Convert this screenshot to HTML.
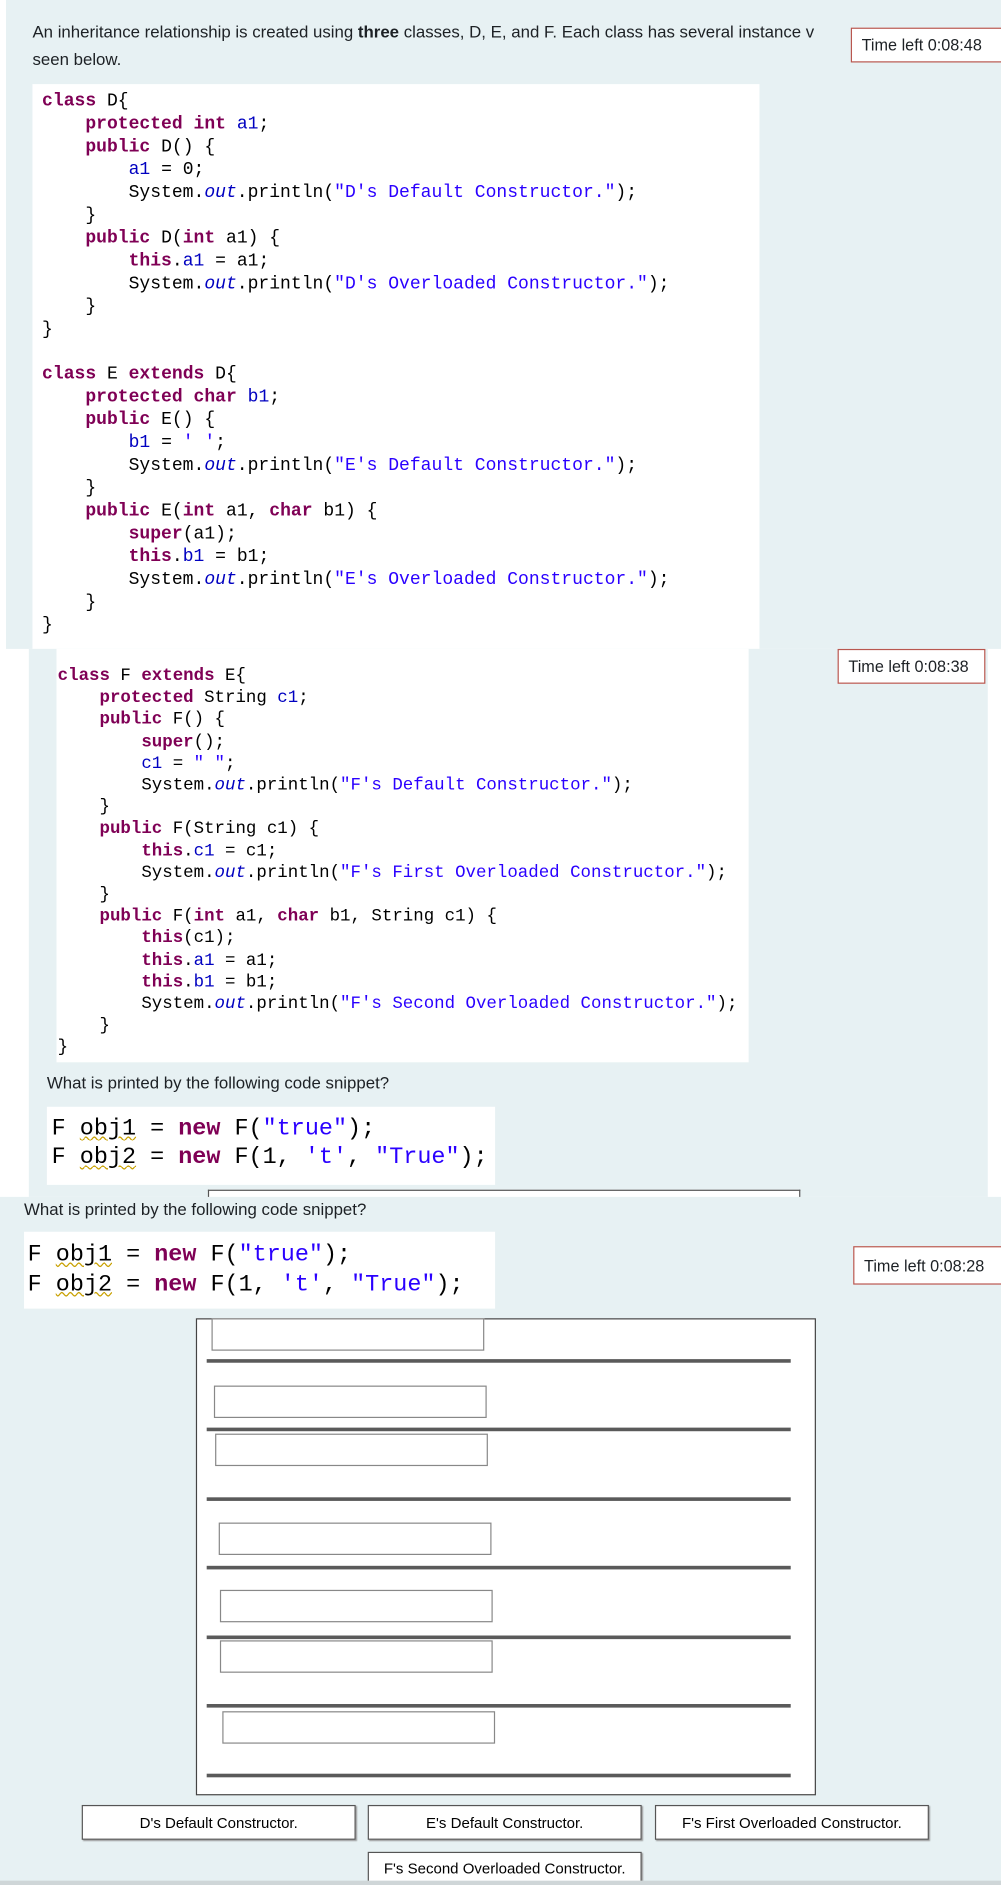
<!DOCTYPE html>
<html><head><meta charset="utf-8"><style>
html,body{margin:0;padding:0;background:#fff;width:1001px;height:1885px;overflow:hidden}
#w{position:absolute;left:0;top:0;width:833px;height:1569px;transform:scale(1.2017);transform-origin:0 0}
.a{position:absolute}
.bg{background:#e7f1f3}
.t{font-family:"Liberation Sans",sans-serif;font-size:14px;color:#1d2125;white-space:nowrap}
pre{margin:0;font-family:"Liberation Mono",monospace;color:#000}
.k{color:#7f0055;font-weight:bold}
.v{color:#0000c0}
.s{color:#2a00ff}
.i{font-style:italic;color:#0000c0}
.tm{border:1px solid #b9574f;background:#fff;font-family:"Liberation Sans",sans-serif;font-size:13.5px;color:#1d2125;box-sizing:border-box;padding-left:8px;display:flex;align-items:center}
.ib{border:1px solid #888;background:#fff;box-sizing:border-box;width:227px;height:27px}
.ln{height:3px;background:#5a5a5a;left:172px;width:486px}
.btn{border:1px solid #555;box-shadow:1px 1px 1px #999;background:#fff;box-sizing:border-box;font-family:"Liberation Sans",sans-serif;font-size:12.5px;display:flex;align-items:center;justify-content:center;width:228px;height:29px}
u{text-decoration:underline wavy #c8a000;text-decoration-thickness:1px}
</style></head><body><div id="w">
<div class="a bg" style="left:5px;top:0;width:828px;height:540px"></div>
<div class="a t" style="left:27px;top:18px">An inheritance relationship is created using <b>three</b> classes, D, E, and F. Each class has several instance v</div>
<div class="a t" style="left:27px;top:41px">seen below.</div>
<div class="a tm" style="left:708px;top:23px;width:126px;height:29px">Time left 0:08:48</div>
<div class="a" style="left:27px;top:70px;width:605px;height:470px;background:#fff"></div>
<pre class="a" style="left:35px;top:76px;font-size:15px;line-height:18.95px"><span class="k">class</span> D{
    <span class="k">protected</span> <span class="k">int</span> <span class="v">a1</span>;
    <span class="k">public</span> D() {
        <span class="v">a1</span> = 0;
        System.<span class="i">out</span>.println(<span class="s">"D's Default Constructor."</span>);
    }
    <span class="k">public</span> D(<span class="k">int</span> a1) {
        <span class="k">this</span>.<span class="v">a1</span> = a1;
        System.<span class="i">out</span>.println(<span class="s">"D's Overloaded Constructor."</span>);
    }
}

<span class="k">class</span> E <span class="k">extends</span> D{
    <span class="k">protected</span> <span class="k">char</span> <span class="v">b1</span>;
    <span class="k">public</span> E() {
        <span class="v">b1</span> = <span class="s">' '</span>;
        System.<span class="i">out</span>.println(<span class="s">"E's Default Constructor."</span>);
    }
    <span class="k">public</span> E(<span class="k">int</span> a1, <span class="k">char</span> b1) {
        <span class="k">super</span>(a1);
        <span class="k">this</span>.<span class="v">b1</span> = b1;
        System.<span class="i">out</span>.println(<span class="s">"E's Overloaded Constructor."</span>);
    }
}</pre>

<div class="a bg" style="left:24px;top:540px;width:798px;height:456px"></div>
<div class="a" style="left:47px;top:540px;width:576px;height:344px;background:#fff"></div>
<div class="a tm" style="left:697px;top:540px;width:123px;height:29px">Time left 0:08:38</div>
<pre class="a" style="left:48px;top:554px;font-size:14.5px;line-height:18.2px"><span class="k">class</span> F <span class="k">extends</span> E{
    <span class="k">protected</span> String <span class="v">c1</span>;
    <span class="k">public</span> F() {
        <span class="k">super</span>();
        <span class="v">c1</span> = <span class="s">" "</span>;
        System.<span class="i">out</span>.println(<span class="s">"F's Default Constructor."</span>);
    }
    <span class="k">public</span> F(String c1) {
        <span class="k">this</span>.<span class="v">c1</span> = c1;
        System.<span class="i">out</span>.println(<span class="s">"F's First Overloaded Constructor."</span>);
    }
    <span class="k">public</span> F(<span class="k">int</span> a1, <span class="k">char</span> b1, String c1) {
        <span class="k">this</span>(c1);
        <span class="k">this</span>.<span class="v">a1</span> = a1;
        <span class="k">this</span>.<span class="v">b1</span> = b1;
        System.<span class="i">out</span>.println(<span class="s">"F's Second Overloaded Constructor."</span>);
    }
}</pre>
<div class="a t" style="left:39px;top:893px">What is printed by the following code snippet?</div>
<div class="a" style="left:39px;top:921px;width:373px;height:65px;background:#fff"></div>
<pre class="a" style="left:43px;top:927px;font-size:19.5px;line-height:24px">F <u>obj1</u> = <span class="k">new</span> F(<span class="s">"true"</span>);
F <u>obj2</u> = <span class="k">new</span> F(1, <span class="s">'t'</span>, <span class="s">"True"</span>);</pre>
<div class="a" style="left:173px;top:990px;width:491px;height:6px;border:1px solid #555;border-bottom:none;background:#fff"></div>

<div class="a bg" style="left:0;top:996px;width:833px;height:573px"></div>
<div class="a t" style="left:20px;top:970px;display:none"></div>
<div class="a t" style="left:20px;top:998px">What is printed by the following code snippet?</div>
<div class="a" style="left:20px;top:1025px;width:392px;height:64px;background:#fff"></div>
<pre class="a" style="left:23px;top:1032px;font-size:19.5px;line-height:24.5px">F <u>obj1</u> = <span class="k">new</span> F(<span class="s">"true"</span>);
F <u>obj2</u> = <span class="k">new</span> F(1, <span class="s">'t'</span>, <span class="s">"True"</span>);</pre>
<div class="a tm" style="left:710px;top:1037px;width:124px;height:32px">Time left 0:08:28</div>
<div class="a" style="left:163px;top:1097px;width:516px;height:397px;border:1px solid #444;box-sizing:border-box;background:#fff"></div>
<div class="a ib" style="left:176px;top:1097px"></div>
<div class="a ib" style="left:178px;top:1153px"></div>
<div class="a ib" style="left:179px;top:1193px"></div>
<div class="a ib" style="left:182px;top:1267px"></div>
<div class="a ib" style="left:183px;top:1323px"></div>
<div class="a ib" style="left:183px;top:1365px"></div>
<div class="a ib" style="left:185px;top:1424px"></div>
<div class="a ln" style="top:1131px"></div>
<div class="a ln" style="top:1188px"></div>
<div class="a ln" style="top:1246px"></div>
<div class="a ln" style="top:1303px"></div>
<div class="a ln" style="top:1361px"></div>
<div class="a ln" style="top:1418px"></div>
<div class="a ln" style="top:1476px"></div>
<div class="a btn" style="left:68px;top:1502px">D's Default Constructor.</div>
<div class="a btn" style="left:306px;top:1502px">E's Default Constructor.</div>
<div class="a btn" style="left:545px;top:1502px">F's First Overloaded Constructor.</div>
<div class="a btn" style="left:306px;top:1541px;height:27px">F's Second Overloaded Constructor.</div>
<div class="a" style="left:0;top:1565px;width:833px;height:4px;background:#cfd6d8"></div>
</div></body></html>
